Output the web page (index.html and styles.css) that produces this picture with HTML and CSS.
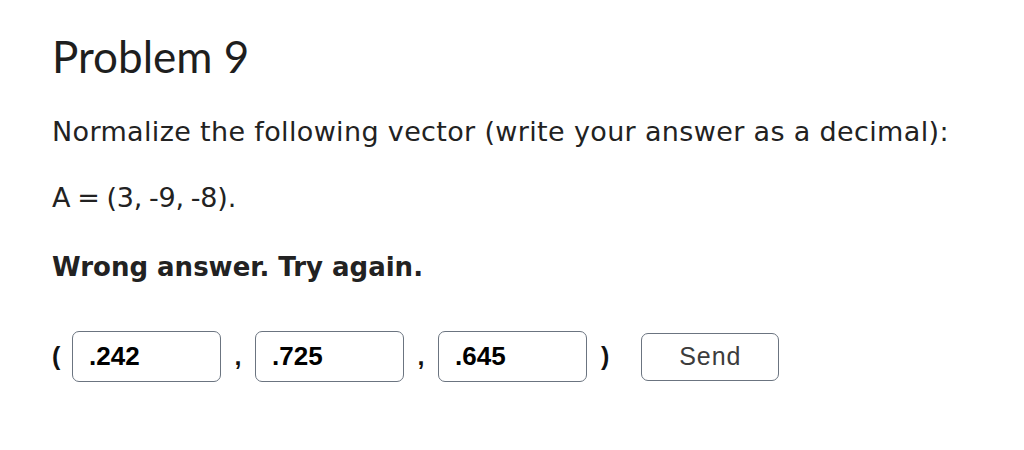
FILE: index.html
```html
<!DOCTYPE html>
<html lang="en">
<head>
    <meta charset="UTF-8">
    <title>Problem 9</title>
    <link rel="stylesheet" href="styles.css">
</head>
<body>
    <div class="problem">
        <h1 class="problem-title">Problem 9</h1>
        <p class="question">Normalize the following vector (write your answer as a decimal):</p>
        <p class="vector">A = (3, -9, -8).</p>
        <p class="feedback">Wrong answer. Try again.</p>

        <form class="answer-row">
            <span class="paren">(</span>
            <input class="answer-input" type="text" value=".242">
            <span class="comma">,</span>
            <input class="answer-input" type="text" value=".725">
            <span class="comma">,</span>
            <input class="answer-input" type="text" value=".645">
            <span class="paren paren-close">)</span>
            <button type="button" class="send-button">Send</button>
        </form>
    </div>
</body>
</html>
```

FILE: styles.css
```css
body {
    margin: 0;
    padding: 0;
    background: #ffffff;
    color: #222222;
    font-family: 'DejaVu Sans', sans-serif;
}

.problem {
    padding: 30px 52px;
}

.problem-title {
    font-family: 'Lato', sans-serif;
    font-weight: 400;
    font-size: 44px;
    line-height: 52px;
    margin: 0 0 34px;
    color: #1e1e1e;
}

.question,
.vector {
    font-size: 27px;
    letter-spacing: 0.35px;
    line-height: 32px;
    margin: 0 0 34px;
    color: #222222;
}

.vector {
    letter-spacing: -0.2px;
    word-spacing: -1.5px;
    margin-bottom: 37px;
}

.feedback {
    font-size: 26px;
    font-weight: bold;
    line-height: 32px;
    margin: 0 0 48px;
}

.answer-row {
    display: flex;
    align-items: center;
    font-family: 'Liberation Sans', Arial, sans-serif;
}

.paren,
.comma {
    font-size: 25px;
    font-weight: bold;
    color: #111111;
}

.paren {
    width: 20px;
}

.paren-close {
    width: auto;
    margin-left: 14px;
    margin-right: 32px;
}

.comma {
    width: 34px;
    text-align: center;
}

.answer-input {
    width: 149px;
    height: 51px;
    box-sizing: border-box;
    padding: 0 16px;
    border: 1.5px solid #6b7480;
    border-radius: 7px;
    font-family: 'Liberation Sans', Arial, sans-serif;
    font-size: 26px;
    font-weight: bold;
    color: #000000;
    outline: none;
}

.send-button {
    width: 138px;
    height: 48px;
    background: #ffffff;
    border: 1.5px solid #6b7480;
    border-radius: 7px;
    font-family: 'Liberation Sans', Arial, sans-serif;
    font-size: 25px;
    letter-spacing: 1px;
    color: #3c3c3c;
    cursor: pointer;
}
```
